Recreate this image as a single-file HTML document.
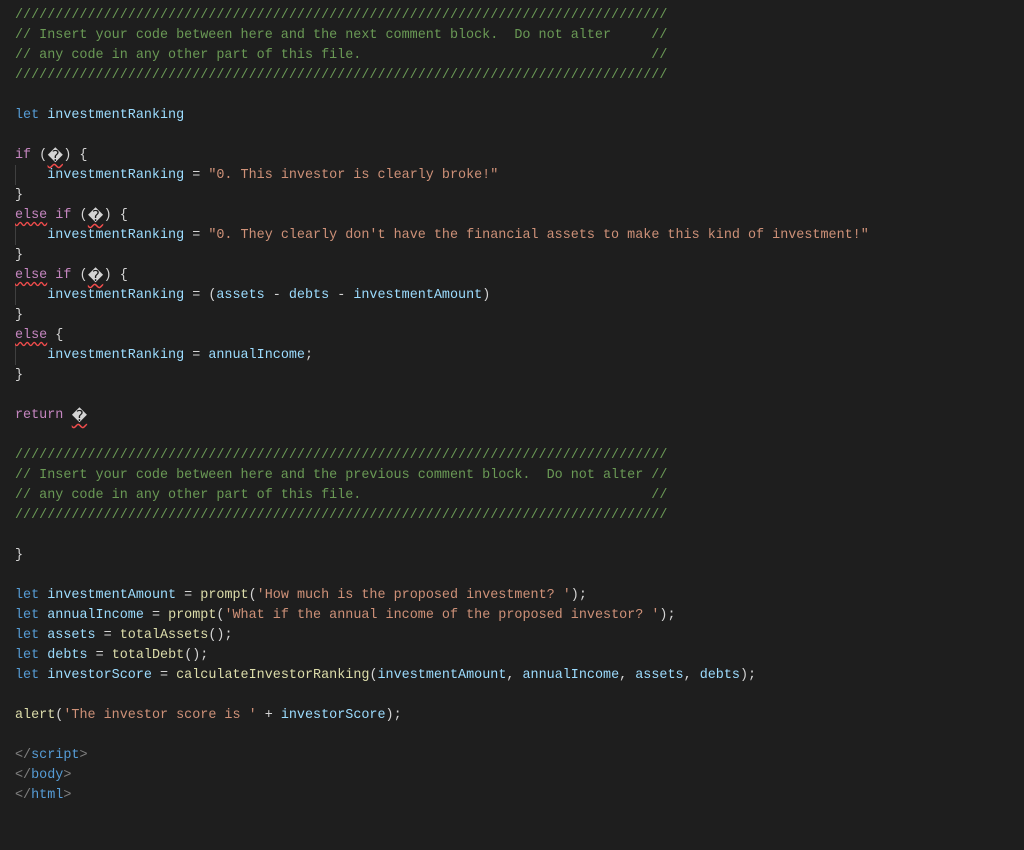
<!DOCTYPE html>
<html><head><meta charset="utf-8"><style>
html,body{margin:0;padding:0;background:#1e1e1e;width:1024px;height:850px;overflow:hidden}
pre{margin:0;position:absolute;left:15px;top:6px;font-family:"Liberation Mono","DejaVu Sans Mono",monospace;font-size:13.43px;line-height:20px;color:#d4d4d4;white-space:pre}
.c{color:#6a9955}.k{color:#569cd6}.p{color:#c586c0}.v{color:#9cdcfe}.s{color:#ce9178}.f{color:#dcdcaa}.t{color:#808080}
.e{text-decoration:underline wavy #f14c4c;text-decoration-skip-ink:none;text-underline-offset:3px}
.q{display:inline-block;width:16.1px;text-align:center;font-family:"DejaVu Sans",sans-serif;font-size:15px;line-height:20px;vertical-align:top;text-decoration:underline wavy #f14c4c;text-decoration-skip-ink:none;text-underline-offset:2px}
.g{position:absolute;left:15px;width:1px;height:20px;background:#404040}
</style></head><body>
<div class="g" style="top:165px"></div>
<div class="g" style="top:225px"></div>
<div class="g" style="top:285px"></div>
<div class="g" style="top:345px"></div>
<pre><span class="c">/////////////////////////////////////////////////////////////////////////////////
// Insert your code between here and the next comment block.  Do not alter     //
// any code in any other part of this file.                                    //
/////////////////////////////////////////////////////////////////////////////////</span>

<span class="k">let</span> <span class="v">investmentRanking</span>

<span class="p">if</span> (<span class="q">�</span>) {
    <span class="v">investmentRanking</span> = <span class="s">"0. This investor is clearly broke!"</span>
}
<span class="p e">else</span> <span class="p">if</span> (<span class="q">�</span>) {
    <span class="v">investmentRanking</span> = <span class="s">"0. They clearly don't have the financial assets to make this kind of investment!"</span>
}
<span class="p e">else</span> <span class="p">if</span> (<span class="q">�</span>) {
    <span class="v">investmentRanking</span> = (<span class="v">assets</span> - <span class="v">debts</span> - <span class="v">investmentAmount</span>)
}
<span class="p e">else</span> {
    <span class="v">investmentRanking</span> = <span class="v">annualIncome</span>;
}

<span class="p">return</span> <span class="q">�</span>

<span class="c">/////////////////////////////////////////////////////////////////////////////////
// Insert your code between here and the previous comment block.  Do not alter //
// any code in any other part of this file.                                    //
/////////////////////////////////////////////////////////////////////////////////</span>

}

<span class="k">let</span> <span class="v">investmentAmount</span> = <span class="f">prompt</span>(<span class="s">'How much is the proposed investment? '</span>);
<span class="k">let</span> <span class="v">annualIncome</span> = <span class="f">prompt</span>(<span class="s">'What if the annual income of the proposed investor? '</span>);
<span class="k">let</span> <span class="v">assets</span> = <span class="f">totalAssets</span>();
<span class="k">let</span> <span class="v">debts</span> = <span class="f">totalDebt</span>();
<span class="k">let</span> <span class="v">investorScore</span> = <span class="f">calculateInvestorRanking</span>(<span class="v">investmentAmount</span>, <span class="v">annualIncome</span>, <span class="v">assets</span>, <span class="v">debts</span>);

<span class="f">alert</span>(<span class="s">'The investor score is '</span> + <span class="v">investorScore</span>);

<span class="t">&lt;/</span><span class="k">script</span><span class="t">&gt;</span>
<span class="t">&lt;/</span><span class="k">body</span><span class="t">&gt;</span>
<span class="t">&lt;/</span><span class="k">html</span><span class="t">&gt;</span></pre>
</body></html>
